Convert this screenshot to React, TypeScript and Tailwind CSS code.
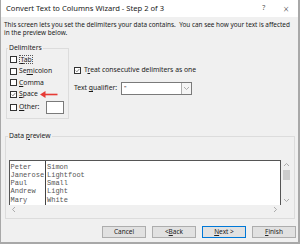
import React from "react";

const UI = { fontFamily: '"Noto Sans", "Open Sans", Arial, sans-serif' };
const MONO = { fontFamily: '"Liberation Mono", "Courier New", monospace' };

const ROWS: [string, string][] = [
  ["Peter", "Simon"],
  ["Janerose", "Lightfoot"],
  ["Paul", "Small"],
  ["Andrew", "Light"],
  ["Mary", "White"],
];

function Check({ checked = false }: { checked?: boolean }) {
  return (
    <span className="flex h-[7px] w-[7px] shrink-0 items-center justify-center border border-[#333] bg-white">
      {checked && (
        <svg width="7" height="7" viewBox="0 0 7 7" fill="none">
          <path d="M1 3.6 L2.7 5.3 L6 1.5" stroke="#333" strokeWidth="0.9" />
        </svg>
      )}
    </span>
  );
}

function Chevron({ dir }: { dir: "up" | "down" | "left" | "right" }) {
  const d = {
    up: "M1 4 L3.5 1.5 L6 4",
    down: "M1 2 L3.5 4.5 L6 2",
    left: "M4 1 L1.5 3.5 L4 6",
    right: "M2 1 L4.5 3.5 L2 6",
  }[dir];
  return (
    <svg width="7" height="7" viewBox="0 0 7 7" fill="none">
      <path d={d} stroke="#9a9a9a" strokeWidth="0.8" />
    </svg>
  );
}

function Btn({ children, primary = false }: { children: React.ReactNode; primary?: boolean }) {
  return (
    <button
      className={`flex h-[12px] w-[44px] items-center justify-center bg-[#e1e1e1] text-[6.5px] leading-none text-[#222] ${
        primary ? "border border-[#0078d7]" : "border border-[#adadad]"
      }`}
    >
      {children}
    </button>
  );
}

export default function App() {
  return (
    <div
      className="flex h-[244px] w-[300px] flex-col overflow-hidden border-b-2 border-l border-r-2 border-[#a8a8a8] bg-[#f0f0f0] text-[#1a1a1a]"
      style={UI}
    >
      {/* Title bar */}
      <div className="flex h-[17px] shrink-0 items-center bg-white pl-[5px] pr-[9px] text-[7.6px]">
        <span>Convert Text to Columns Wizard - Step 2 of 3</span>
        <span className="ml-auto text-[7px] text-[#555]">?</span>
        <span className="ml-[18px] text-[10px] font-light leading-none text-[#444]">×</span>
      </div>

      {/* Description */}
      <p className="mt-[4px] whitespace-nowrap pl-[3px] text-[6.4px] leading-[7.5px]">
        This screen lets you set the delimiters your data contains.&nbsp; You can see how your text is affected
        <br />
        in the preview below.
      </p>

      {/* Delimiters + options */}
      <div className="mt-[12px] flex">
        <div className="relative ml-[5px] h-[71px] w-[63px] shrink-0 border border-[#dcdcdc] pl-[3px] pt-[5px] text-[6.8px]">
          <span className="absolute -top-[5px] left-[1px] bg-[#f0f0f0] px-[1px] leading-[8px]">Delimiters</span>
          <div className="flex h-[11.5px] items-center gap-[2px]">
            <Check />
            <span className="border border-dotted border-[#555] px-[0.5px] leading-[7px]">
              <u>T</u>ab
            </span>
          </div>
          <div className="flex h-[11.5px] items-center gap-[2px]">
            <Check />
            <span>
              Se<u>m</u>icolon
            </span>
          </div>
          <div className="flex h-[11.5px] items-center gap-[2px]">
            <Check />
            <span>
              <u>C</u>omma
            </span>
          </div>
          <div className="relative flex h-[11.5px] items-center gap-[2px]">
            <Check checked />
            <span>
              <u>S</u>pace
            </span>
            <svg className="absolute left-[30px] top-[2px]" width="18" height="7" viewBox="0 0 18 7">
              <path d="M4 3.5 H17.5" stroke="#e63a35" strokeWidth="1.6" />
              <path d="M0 3.5 L5.5 0 L5.5 7 Z" fill="#e63a35" />
            </svg>
          </div>
          <div className="flex h-[14px] items-center gap-[2px]">
            <Check />
            <span>
              <u>O</u>ther:
            </span>
            <span className="ml-[5px] h-[13px] w-[18px] border border-[#7a7a7a] bg-white" />
          </div>
        </div>

        <div className="ml-[5px] flex flex-col pt-[17px] text-[6.8px]">
          <div className="flex h-[11px] items-center gap-[3px]">
            <Check checked />
            <span>
              T<u>r</u>eat consecutive delimiters as one
            </span>
          </div>
          <div className="mt-[6px] flex h-[13px] items-center">
            <span className="w-[47px]">
              Text <u>q</u>ualifier:
            </span>
            <div className="flex h-[13px] w-[71px] items-center border border-[#7a7a7a] bg-white">
              <span className="pl-[2px] text-[6px]">"</span>
              <span className="ml-auto flex h-full w-[10px] items-center justify-center border-l border-[#adadad] bg-[#f5f5f5]">
                <Chevron dir="down" />
              </span>
            </div>
          </div>
        </div>
      </div>

      {/* Data preview */}
      <div className="relative ml-[4px] mt-[17px] h-[83px] w-[290px] border border-[#dcdcdc] pl-[3px] pt-[23px]">
        <span className="absolute -top-[5px] left-[2px] bg-[#f0f0f0] px-[1px] text-[6.8px] leading-[8px]">
          Data <u>p</u>review
        </span>
        <div className="flex h-[54px] w-[282px]">
          <div className="flex w-[272px] flex-col">
            <div
              className="flex h-[45px] border-l border-r border-t border-[#555] bg-white text-[7px] leading-[8.3px] text-[#555]"
              style={MONO}
            >
              <div className="w-[36px] border-r border-[#444] pl-[0.5px] pt-[1.5px]">
                {ROWS.map(([a]) => (
                  <div key={a}>{a}</div>
                ))}
              </div>
              <div className="pl-[1px] pt-[1.5px]">
                {ROWS.map(([, b]) => (
                  <div key={b}>{b}</div>
                ))}
              </div>
            </div>
            <div className="flex h-[9px] items-center justify-between px-[2px]">
              <Chevron dir="left" />
              <Chevron dir="right" />
            </div>
          </div>
          <div className="flex h-[45px] w-[10px] flex-col items-center pt-[2px]">
            <Chevron dir="up" />
            <span className="mt-[1px] h-[10px] w-[7px] bg-[#cdcdcd]" />
            <span className="mt-auto pb-[1px]">
              <Chevron dir="down" />
            </span>
          </div>
        </div>
      </div>

      {/* Buttons */}
      <div className="mt-[7px] flex gap-[6px] pl-[101px]">
        <Btn>Cancel</Btn>
        <Btn>
          &lt; <u>B</u>ack
        </Btn>
        <Btn primary>
          <u>N</u>ext &gt;
        </Btn>
        <Btn>
          <u>F</u>inish
        </Btn>
      </div>
    </div>
  );
}
